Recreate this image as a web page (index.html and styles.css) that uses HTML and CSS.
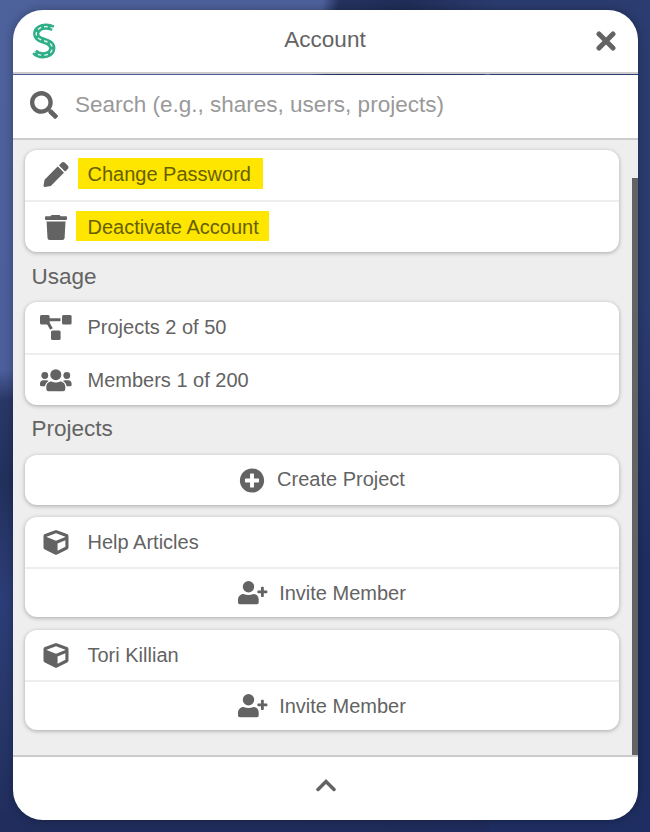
FILE: index.html
```html
<!DOCTYPE html>
<html lang="en">
<head>
<meta charset="UTF-8">
<title>Account</title>
<meta name="viewport" content="width=device-width, initial-scale=1.0">
<link rel="stylesheet" href="styles.css">
</head>
<body>

<!-- Shared icons -->
<svg class="sprite" aria-hidden="true">
    <symbol id="icon-cube" viewBox="0 0 512 512">
        <path d="M239.100 6.300l-208 78c-18.700 7-31.100 25-31.100 45v225.100c0 18.200 10.300 34.800 26.500 42.900l208 104c13.500 6.800 29.400 6.800 42.900 0l208-104c16.300-8.100 26.500-24.800 26.500-42.900V129.300c0-20-12.400-37.900-31.100-44.900l-208-78C262 2.200 250 2.200 239.100 6.300zM256 68.400l192 72v1.100l-192 78-192-78v-1.100l192-72zm32 356V275.500l160-65v133.900l-160 80z"/>
    </symbol>
    <symbol id="icon-user-plus" viewBox="0 0 30 24">
        <circle cx="10.500" cy="5.700" r="5.700"/>
        <path d="M5.500 13c3 1.200 7 1.200 10 0c3 0 5.200 2.500 5.200 5.500V21.500a1.700 1.700 0 0 1-1.700 1.700H1.700A1.700 1.700 0 0 1 0 21.500V18.500C0 15.500 2.500 13 5.500 13z"/>
        <path d="M23 6.500a.7.700 0 0 1 .7-.7h1.400a.7.700 0 0 1 .7.700v3h2.900a.7.700 0 0 1 .7.700v1.400a.7.700 0 0 1-.7.700h-2.900v3a.7.700 0 0 1-.7.700h-1.400a.7.700 0 0 1-.7-.7v-3h-2.900a.7.700 0 0 1-.7-.7v-1.400a.7.700 0 0 1 .7-.7H23z"/>
    </symbol>
</svg>

<main class="panel">
    <header class="header">
        <svg class="logo" viewBox="0 0 24 36">
            <path class="logo-body" d="M21 5.300C17 3.200 11 3 8 5C3 8 3 13.500 7.500 16C11 18 20 18.500 20.300 25C20 30.500 15.500 32.300 11 32.300C7 32.200 4.500 31 2.500 28.800"/>
            <path class="logo-dashes" d="M21 5.300C17 3.200 11 3 8 5C3 8 3 13.500 7.500 16C11 18 20 18.500 20.300 25C20 30.500 15.500 32.300 11 32.300C7 32.200 4.500 31 2.500 28.800"/>
        </svg>
        <h1 class="title">Account</h1>
        <svg class="close" viewBox="0 0 20 20"><path d="M3 3l14 14M17 3L3 17"/></svg>
    </header>

    <div class="search">
        <svg class="search-icon" viewBox="0 0 512 512"><path d="M505 442.700L405.300 343c-4.500-4.500-10.600-7-17-7H372c27.600-35.300 44-79.700 44-128C416 93.100 322.900 0 208 0S0 93.100 0 208s93.100 208 208 208c48.300 0 92.700-16.400 128-44v16.300c0 6.400 2.500 12.500 7 17l99.700 99.700c9.400 9.400 24.600 9.400 33.900 0l28.300-28.300c9.400-9.400 9.400-24.600.1-34zM208 336c-70.700 0-128-57.200-128-128 0-70.700 57.200-128 128-128 70.700 0 128 57.200 128 128 0 70.700-57.200 128-128 128z"/></svg>
        <span>Search (e.g., shares, users, projects)</span>
    </div>

    <div class="content">
        <div class="card">
            <div class="row">
                <svg class="icon icon-pencil" viewBox="0 0 512 512"><path d="M497.900 142.100l-46.100 46.100c-4.700 4.700-12.300 4.700-17 0l-111-111c-4.700-4.700-4.700-12.300 0-17l46.100-46.100c18.700-18.700 49.100-18.700 67.900 0l60.100 60.100c18.800 18.700 18.800 49.100 0 67.900zM284.200 99.800L21.600 362.400.4 483.900c-2.900 16.400 11.400 30.600 27.800 27.800l121.500-21.300 262.600-262.600c4.700-4.700 4.700-12.300 0-17l-111-111c-4.800-4.700-12.400-4.700-17.100 0z"/></svg>
                <span class="mark mark-password">Change Password</span>
            </div>
            <div class="row">
                <svg class="icon" viewBox="0 0 32 25"><path d="M6 1.200h4.500L11.600 0h8l1.100 1.200H26a1 1 0 0 1 1 1V4a1 1 0 0 1-1 1H6a1 1 0 0 1-1-1V2.200a1 1 0 0 1 1-1zM6.600 6.600h18.900L24.600 23a2.200 2.200 0 0 1-2.200 2H9.700a2.200 2.200 0 0 1-2.200-2z"/></svg>
                <span class="mark mark-deactivate">Deactivate Account</span>
            </div>
        </div>

        <h2>Usage</h2>
        <div class="card card-usage">
            <div class="row">
                <svg class="icon" viewBox="0 0 32 25">
                    <rect x="0" y="0" width="9.600" height="9.400" rx="1.500"/>
                    <rect x="22" y="0" width="9.600" height="9.400" rx="1.500"/>
                    <rect x="11" y="15.600" width="9.600" height="9.400" rx="1.500"/>
                    <path class="link" d="M8 4.800h12.500M7.500 7l4 7"/>
                </svg>
                <span>Projects 2 of 50</span>
            </div>
            <div class="row">
                <svg class="icon" viewBox="0 0 32 25">
                    <circle cx="15.800" cy="6.700" r="5.500"/>
                    <circle cx="4.800" cy="7.500" r="3.400"/>
                    <circle cx="26.800" cy="7.500" r="3.400"/>
                    <path d="M11.500 13.600c2.500 1.300 6.100 1.300 8.600 0c3 0 5.200 2.300 5.200 5.200v2.200a2.200 2.200 0 0 1-2.200 2.200H8.500a2.200 2.200 0 0 1-2.200-2.200v-2.200c0-2.900 2.200-5.200 5.200-5.200z"/>
                    <path d="M3.200 12.300h3.200c.9 0 1.600.3 2.200.8C6.700 14.200 5.300 16 5 18.300H1.500A1.500 1.500 0 0 1 0 16.800v-1.300c0-1.800 1.400-3.200 3.200-3.200zM28.400 12.300h-3.200c-.9 0-1.600.3-2.200.8c1.900 1.100 3.300 2.900 3.600 5.200h3.500a1.500 1.500 0 0 0 1.500-1.500v-1.300c0-1.800-1.400-3.200-3.200-3.200z"/>
                </svg>
                <span>Members 1 of 200</span>
            </div>
        </div>

        <h2 class="heading-projects">Projects</h2>
        <div class="card">
            <div class="row row-action">
                <svg class="icon icon-create" viewBox="0 0 512 512"><path d="M256 8C119 8 8 119 8 256s111 248 248 248 248-111 248-248S393 8 256 8zm144 276c0 6.600-5.400 12-12 12h-92v92c0 6.600-5.400 12-12 12h-56c-6.600 0-12-5.400-12-12v-92h-92c-6.600 0-12-5.400-12-12v-56c0-6.600 5.400-12 12-12h92v-92c0-6.600 5.400-12 12-12h56c6.600 0 12 5.400 12 12v92h92c6.600 0 12 5.400 12 12v56z"/></svg>
                <span>Create Project</span>
            </div>
        </div>

        <div class="card card-project">
            <div class="row">
                <svg class="icon"><use href="#icon-cube"/></svg>
                <span>Help Articles</span>
            </div>
            <div class="row row-action">
                <svg class="icon icon-invite"><use href="#icon-user-plus"/></svg>
                <span>Invite Member</span>
            </div>
        </div>

        <div class="card card-project card-last">
            <div class="row">
                <svg class="icon"><use href="#icon-cube"/></svg>
                <span>Tori Killian</span>
            </div>
            <div class="row row-action">
                <svg class="icon icon-invite"><use href="#icon-user-plus"/></svg>
                <span>Invite Member</span>
            </div>
        </div>
        <div class="scrollbar"></div>
    </div>

    <footer class="footer">
        <svg class="chevron" viewBox="0 0 20 13"><path d="M2 10.500l8-8 8 8"/></svg>
    </footer>
</main>

</body>
</html>
```

FILE: styles.css
```css
* {
    box-sizing: border-box;
}

body {
    margin: 0;
    height: 832px;
    padding: 10px 12px 12px 13px;
    overflow: hidden;
    font-family: "Liberation Sans", Arial, sans-serif;
    font-size: 20px;
    color: #636363;
    /* dusk mountain backdrop */
    background:
        linear-gradient(100deg, transparent 318px, #25335f 334px, #202d58 400px, #2b3c70 490px, transparent 491px) 0 0 / 100% 80px no-repeat,
        linear-gradient(#2b3c70, #2b3c70 300px, #1f2e62 560px) 100% 0 / 160px 100% no-repeat,
        linear-gradient(to right, transparent 300px, #1f2b5c 490px) 0 740px / 100% 92px no-repeat,
        linear-gradient(#4d619b 0, #4b5f9c 370px, #2a3868 400px, #22305c 480px, #2c3e78 600px, #263769 720px, #202c5b 832px);
}

h1, h2 {
    margin: 0;
    font-weight: normal;
    font-size: 22.5px;
}

svg {
    display: block;
    fill: currentColor;
}

.sprite {
    position: absolute;
    width: 0;
    height: 0;
}

.panel {
    display: flex;
    flex-direction: column;
    height: 810px;
    border-radius: 30px;
    overflow: hidden;
    box-shadow: 0 0 10px rgba(0, 0, 0, 0.3);
}

.header {
    display: flex;
    align-items: center;
    justify-content: space-between;
    height: 64px;
    padding: 0 22px 0 19px;
    margin-bottom: 1px;
    background: #fff;
    border-bottom: 2px solid #ccc;
}

.logo {
    width: 24px;
    height: 36px;
    fill: none;
}

.logo-body {
    stroke: #2fae87;
    stroke-width: 6.2;
}

.logo-dashes {
    stroke: #e4f6ef;
    stroke-width: 1.4;
    stroke-dasharray: 3.6 3;
    stroke-dashoffset: 1;
}

.title {
    line-height: 26px;
    padding: 0 2px 2px 0;
}

.close {
    width: 20px;
    height: 20px;
    stroke: #636363;
    stroke-width: 5;
    stroke-linecap: round;
}

.search {
    display: flex;
    align-items: center;
    gap: 17px;
    height: 65px;
    padding: 0 17px 3px;
    background: #fff;
    border-bottom: 2px solid #ccc;
    font-size: 22.5px;
    color: #999;
}

.search-icon {
    width: 28px;
    height: 28px;
    color: #636363;
}

.content {
    position: relative;
    flex: 1;
    padding: 10px 19px 0 12px;
    background: #eee;
}

.content h2 {
    height: 50px;
    padding-left: 6.5px;
    line-height: 50px;
}

.content .heading-projects {
    line-height: 48px;
}

.card {
    border-radius: 12px;
    background: #fff;
    box-shadow: 0 1px 4px rgba(0, 0, 0, 0.3);
}

.row {
    display: flex;
    align-items: center;
    height: 50px;
    padding-left: 15px;
}

.row + .row {
    height: 52px;
    border-top: 2px solid #eee;
}

.card-usage .row:first-child {
    height: 51px;
}

.card-project {
    margin-top: 12px;
}

.card-project .row + .row {
    height: 50px;
}

.card-last {
    margin-top: 13px;
}

.icon {
    width: 32px;
    height: 25px;
    margin-right: 15.5px;
}

.icon-pencil {
    margin-bottom: 2px;
}

.link {
    fill: none;
    stroke: currentColor;
    stroke-width: 3;
}

.row-action,
.row + .row-action {
    justify-content: center;
    padding: 0;
}

.icon-create {
    width: 26px;
    margin-right: 12px;
}

.icon-create + span {
    margin-bottom: 2px;
}

.icon-invite {
    width: 30px;
    height: 24px;
    margin-right: 11px;
}

.mark {
    line-height: 30px;
    background: #ffe600;
    color: #666000;
}

.mark-password {
    padding: 1px 12px 0 9.5px;
    margin: 0 0 3px -9.5px;
}

.mark-deactivate {
    line-height: 28px;
    padding: 2px 10px 0 11.5px;
    margin: 0 0 2px -11.5px;
}

.scrollbar {
    position: absolute;
    top: 38px;
    right: 0;
    bottom: 0;
    width: 6px;
    background: #636363;
}

.footer {
    display: flex;
    align-items: center;
    justify-content: center;
    height: 65px;
    padding: 0 0 6px;
    background: #fff;
    border-top: 2px solid #ccc;
}

.chevron {
    width: 20px;
    height: 13px;
    fill: none;
    stroke: #636363;
    stroke-width: 3.5;
    stroke-linecap: round;
}
```
